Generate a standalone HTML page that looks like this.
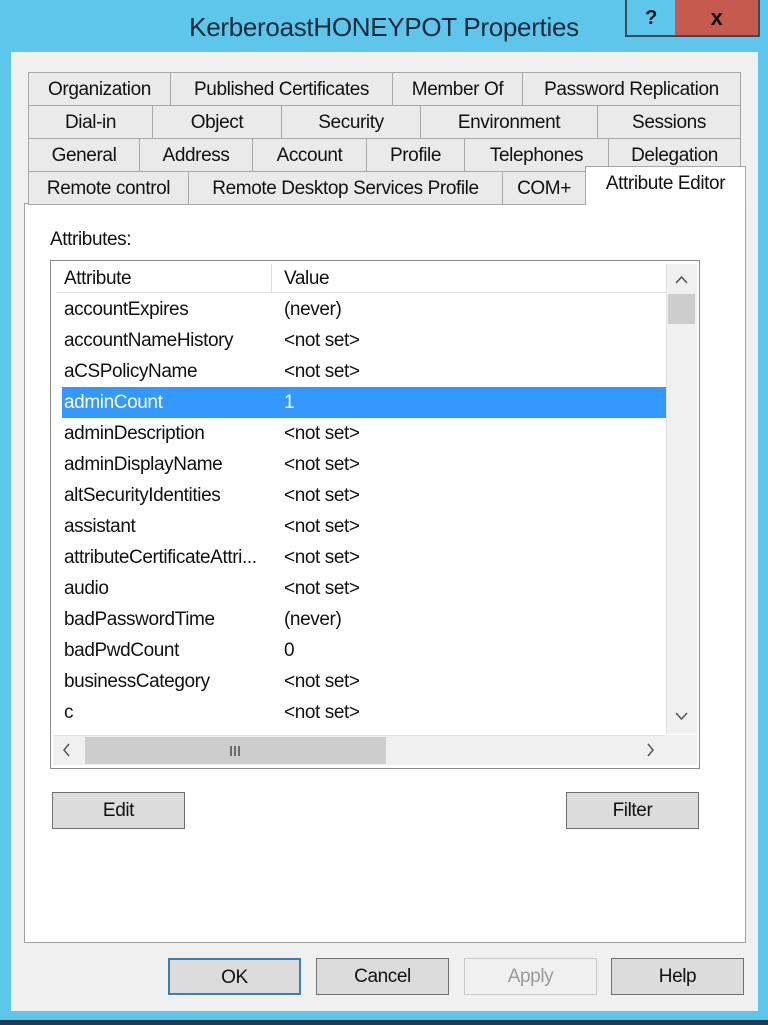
<!DOCTYPE html>
<html><head><meta charset="utf-8"><style>
*{box-sizing:border-box;margin:0;padding:0}
body{width:768px;height:1025px;background:#5ec6ea;position:relative;overflow:hidden;font-family:"Liberation Sans",sans-serif;font-size:19px;letter-spacing:-0.4px;color:#111}
.a{position:absolute}
.title{left:0;width:768px;top:12px;text-align:center;font-size:26px;letter-spacing:-0.3px;color:#1a2a3a}
.panel{left:11px;top:52px;width:747px;height:959px;background:#f0f0f0}
.tab{position:absolute;height:34px;border:1px solid #a8a8a8;background:#eaeaea;text-align:center;line-height:33px;white-space:nowrap}
.page{left:24px;top:203px;width:722px;height:740px;background:#fff;border:1px solid #a0a0a0}
.btn{position:absolute;background:#dcdcdc;border:1px solid #707070;text-align:center;line-height:36px}
.row{position:absolute;left:62px;width:604px;height:31px;line-height:31px}
.row span{position:absolute;left:2px;white-space:nowrap}
.row span+span{left:222px}
.sel{background:#3399ff;color:#fff}
</style></head><body>
<div class="a title">KerberoastHONEYPOT Properties</div>
<div class="a" style="left:625px;top:-2px;width:52px;height:39px;border:2px solid #3a4a5a;background:#5ec6ea;text-align:center;font:bold 20px 'Liberation Sans',sans-serif;line-height:36px">?</div>
<div class="a" style="left:675px;top:-2px;width:85px;height:39px;border:2px solid #3a4a5a;border-left:0;background:#c75a4e;text-align:center;font:bold 22px 'Liberation Sans',sans-serif;line-height:36px">x</div>
<div class="a panel"></div>
<div class="a page"></div>
<div class="tab" style="left:28px;top:72px;width:143px">Organization</div>
<div class="tab" style="left:170px;top:72px;width:223px">Published Certificates</div>
<div class="tab" style="left:392px;top:72px;width:131px">Member Of</div>
<div class="tab" style="left:522px;top:72px;width:219px">Password Replication</div>
<div class="tab" style="left:28px;top:105px;width:125px">Dial-in</div>
<div class="tab" style="left:152px;top:105px;width:130px">Object</div>
<div class="tab" style="left:281px;top:105px;width:140px">Security</div>
<div class="tab" style="left:420px;top:105px;width:178px">Environment</div>
<div class="tab" style="left:597px;top:105px;width:144px">Sessions</div>
<div class="tab" style="left:28px;top:138px;width:112px">General</div>
<div class="tab" style="left:139px;top:138px;width:114px">Address</div>
<div class="tab" style="left:252px;top:138px;width:115px">Account</div>
<div class="tab" style="left:366px;top:138px;width:99px">Profile</div>
<div class="tab" style="left:464px;top:138px;width:145px">Telephones</div>
<div class="tab" style="left:608px;top:138px;width:133px">Delegation</div>
<div class="tab" style="left:28px;top:171px;width:161px">Remote control</div>
<div class="tab" style="left:188px;top:171px;width:315px">Remote Desktop Services Profile</div>
<div class="tab" style="left:502px;top:171px;width:84px">COM+</div>
<div class="tab" style="left:585px;top:166px;width:161px;height:39px;background:#fff;border-bottom:none;line-height:34px">Attribute Editor</div>
<div class="a" style="left:50px;top:229px">Attributes:</div>
<div class="a" style="left:50px;top:260px;width:650px;height:509px;border:1px solid #8a8a8a;background:#fff"></div>
<div class="a" style="left:56px;top:264px;width:610px;height:29px;border-bottom:1px solid #e0e0e0;line-height:29px"><span class="a" style="left:8px">Attribute</span><span class="a" style="left:215px;top:0;height:29px;border-left:1px solid #e0e0e0"></span><span class="a" style="left:228px">Value</span></div>
<div class="row" style="top:294px"><span>accountExpires</span><span>(never)</span></div>
<div class="row" style="top:325px"><span>accountNameHistory</span><span>&lt;not set&gt;</span></div>
<div class="row" style="top:356px"><span>aCSPolicyName</span><span>&lt;not set&gt;</span></div>
<div class="row sel" style="top:387px"><span>adminCount</span><span>1</span></div>
<div class="row" style="top:418px"><span>adminDescription</span><span>&lt;not set&gt;</span></div>
<div class="row" style="top:449px"><span>adminDisplayName</span><span>&lt;not set&gt;</span></div>
<div class="row" style="top:480px"><span>altSecurityIdentities</span><span>&lt;not set&gt;</span></div>
<div class="row" style="top:511px"><span>assistant</span><span>&lt;not set&gt;</span></div>
<div class="row" style="top:542px"><span>attributeCertificateAttri...</span><span>&lt;not set&gt;</span></div>
<div class="row" style="top:573px"><span>audio</span><span>&lt;not set&gt;</span></div>
<div class="row" style="top:604px"><span>badPasswordTime</span><span>(never)</span></div>
<div class="row" style="top:635px"><span>badPwdCount</span><span>0</span></div>
<div class="row" style="top:666px"><span>businessCategory</span><span>&lt;not set&gt;</span></div>
<div class="row" style="top:697px"><span>c</span><span>&lt;not set&gt;</span></div>
<div class="a" style="left:666px;top:264px;width:31px;height:470px;background:#f0f0f0;border-left:1px solid #e4e4e4"></div>
<svg class="a" style="left:666px;top:264px" width="31" height="470"><polyline points="10,19 15.5,13 21,19" fill="none" stroke="#555" stroke-width="1.5"/><polyline points="10,449 15.5,455 21,449" fill="none" stroke="#555" stroke-width="1.5"/></svg>
<div class="a" style="left:668px;top:294px;width:27px;height:30px;background:#cdcdcd"></div>
<div class="a" style="left:53px;top:735px;width:611px;height:30px;background:#f0f0f0;border-top:1px solid #e4e4e4"></div>
<svg class="a" style="left:53px;top:735px" width="611" height="30"><polyline points="16,9 11,15 16,21" fill="none" stroke="#555" stroke-width="1.5"/><polyline points="595,9 600,15 595,21" fill="none" stroke="#555" stroke-width="1.5"/></svg>
<div class="a" style="left:85px;top:737px;width:301px;height:27px;background:#cdcdcd"></div>
<svg class="a" style="left:228px;top:744px" width="16" height="14"><path d="M3 2V12M7 2V12M11 2V12" stroke="#555" stroke-width="1.6"/></svg>
<div class="a" style="left:664px;top:735px;width:33px;height:30px;background:#f0f0f0"></div>
<div class="btn" style="left:52px;top:792px;width:133px;height:37px">Edit</div>
<div class="btn" style="left:566px;top:792px;width:133px;height:37px">Filter</div>
<div class="btn" style="left:168px;top:958px;width:133px;height:37px;border:2px solid #3c7fb1">OK</div>
<div class="btn" style="left:316px;top:958px;width:133px;height:37px">Cancel</div>
<div class="btn" style="left:464px;top:958px;width:133px;height:37px;background:#f0f0f0;border-color:#c8c8c8;color:#9a9a9a">Apply</div>
<div class="btn" style="left:611px;top:958px;width:133px;height:37px">Help</div>
<div class="a" style="left:0;top:1020px;width:768px;height:5px;background:#1e3c58"></div>
</body></html>
